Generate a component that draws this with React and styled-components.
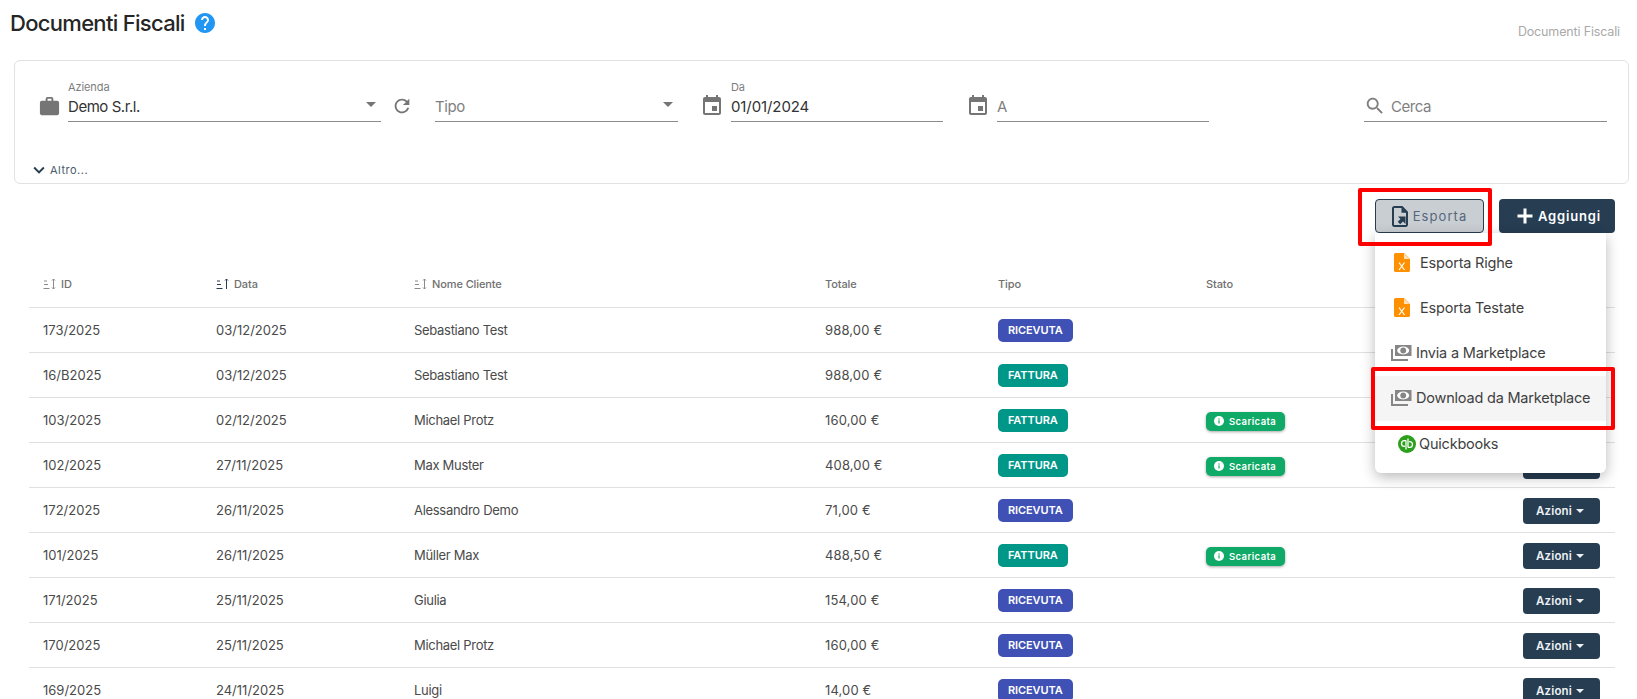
import React from "react";
import styled, { createGlobalStyle } from "styled-components";

const Global = createGlobalStyle`
  html, body { margin: 0; padding: 0; background: #fff; height: 699px; overflow: hidden; }
  body { font-family: Inter, "Noto Sans", sans-serif; color: #3d3d3d; }
  * { box-sizing: border-box; }
`;

const Page = styled.div`
  width: 1637px;
  height: 699px;
  overflow: hidden;
  position: relative;
`;
const Header = styled.header`
  display: flex;
  justify-content: space-between;
  padding: 11px 17px 0 10px;
  height: 60px;
`;
const TitleWrap = styled.div`
  display: flex;
  align-items: flex-start;
  gap: 8px;
`;
const Title = styled.h1`
  margin: 0;
  font-size: 22px;
  line-height: 25px;
  font-weight: 500;
  letter-spacing: -0.7px;
  color: #262626;
`;
const Crumb = styled.div`
  font-size: 12.5px;
  line-height: 16px;
  margin-top: 13px;
  color: #a9a9a9;
  letter-spacing: -0.15px;
`;
const FilterCard = styled.section`
  margin-left: 14px;
  width: 1615px;
  height: 124px;
  border: 1px solid #e2e2e2;
  border-radius: 6px;
  padding: 0 23px 0 23px;
  position: relative;
  display: flex;
  flex-direction: column;
  justify-content: space-between;
`;
const FilterRow = styled.div`
  display: flex;
  align-items: flex-end;
  height: 61px;
`;
const IconCell = styled.div`
  width: ${(p) => p.$w}px;
  margin-left: ${(p) => p.$ml || 0}px;
  height: 24px;
  margin-bottom: 4px;
  display: flex;
  align-items: center;
  color: #757575;
  flex-shrink: 0;
`;
const Field = styled.div`
  width: ${(p) => p.$w}px;
  margin-left: ${(p) => p.$ml || 0}px;
  flex-shrink: 0;
  height: 35px;
  border-bottom: 1px solid #8b8b8b;
  position: relative;
  display: flex;
  align-items: flex-end;
  padding-bottom: 4px;
  font-size: 15px;
  line-height: 20px;
  letter-spacing: ${(p) => (p.$date ? "-0.1px" : "-0.45px")};
  color: ${(p) => (p.$ph ? "#7f7f7f" : "#333")};
`;
const FloatLabel = styled.label`
  position: absolute;
  left: 0;
  top: -6px;
  font-size: 11px;
  line-height: 13px;
  letter-spacing: -0.1px;
  color: #7d7d7d;
`;
const Caret = styled.span`
  position: absolute;
  right: 5px;
  top: 15px;
  width: 0;
  height: 0;
  border-left: 5px solid transparent;
  border-right: 5px solid transparent;
  border-top: 5px solid #757575;
`;
const SearchText = styled.span`
  margin-left: 5px;
`;
const More = styled.div`
  display: flex;
  align-items: center;
  gap: 0;
  margin-left: -10px;
  margin-bottom: 2px;
  font-size: 11px;
  line-height: 14px;
  letter-spacing: 0.5px;
  color: #4a5b6c;
`;
const ActionBar = styled.div`
  display: flex;
  justify-content: flex-end;
  gap: 15px;
  padding: 15px 22px 0 0;
  height: 64px;
  position: relative;
`;
const ExportButton = styled.button`
  width: 109px;
  height: 34px;
  background: #c9ced3;
  border: 1px solid #263d52;
  border-radius: 4px;
  font-family: inherit;
  font-size: 13px;
  font-weight: 400;
  letter-spacing: 1.05px;
  color: #56677a;
  display: flex;
  align-items: center;
  justify-content: center;
  gap: 5px;
  padding: 0;
`;
const AddButton = styled.button`
  width: 116px;
  height: 34px;
  background: #263d52;
  border: 0;
  border-radius: 4px;
  font-family: inherit;
  font-size: 13px;
  font-weight: 600;
  letter-spacing: 0.85px;
  color: #fff;
  display: flex;
  align-items: center;
  justify-content: center;
  gap: 1px;
  padding: 0;
`;
const Menu = styled.div`
  position: absolute;
  left: 1375px;
  top: 233px;
  width: 231px;
  height: 240px;
  background: #fff;
  border-radius: 0 0 6px 6px;
  box-shadow: 0 4px 14px rgba(0, 0, 0, 0.28);
  padding: 8px 0 0;
  z-index: 5;
`;
const MenuItem = styled.div`
  height: 45px;
  display: flex;
  align-items: center;
  padding-left: ${(p) => p.$pl}px;
  padding-bottom: ${(p) => p.$pb ?? 2}px;
  gap: ${(p) => p.$gap}px;
  background: ${(p) => (p.$active ? "#f5f5f5" : "transparent")};
  font-size: 14.5px;
  letter-spacing: -0.2px;
  color: #3f3f3f;
`;
const Annotation = styled.div`
  position: absolute;
  left: ${(p) => p.$x}px;
  top: ${(p) => p.$y}px;
  width: ${(p) => p.$w}px;
  height: ${(p) => p.$h}px;
  border: 4px solid #ff0000;
  border-radius: 2px;
  z-index: 6;
`;
const Table = styled.div`
  margin-left: 29px;
  width: 1586px;
`;
const cols = "173px 198px 411px 173px 208px 1fr 92px";
const HeadRow = styled.div`
  display: grid;
  grid-template-columns: ${cols};
  height: 60px;
  align-items: center;
  padding-top: 12px;
  border-bottom: 1px solid #e0e0e0;
  font-size: 11px;
  font-weight: 500;
  letter-spacing: -0.1px;
  color: #707070;
  & > div { display: flex; align-items: center; gap: 4px; padding-left: 14px; }
`;
const Row = styled.div`
  display: grid;
  grid-template-columns: ${cols};
  height: 45px;
  align-items: center;
  border-bottom: 1px solid #e0e0e0;
  font-size: 13px;
  color: #4a4a4a;
  & > div { padding-left: 14px; }
`;
const NameCell = styled.div`
  letter-spacing: -0.3px;
`;
const TotalCell = styled.div`
  letter-spacing: 0.15px;
`;
const TypeBadge = styled.span`
  display: inline-block;
  height: 23px;
  line-height: 22px;
  padding: 0 10px;
  border-radius: 5px;
  font-size: 11px;
  font-weight: 600;
  letter-spacing: -0.1px;
  color: #fff;
  background: ${(p) => (p.$type === "RICEVUTA" ? "#3f51b5" : "#009688")};
`;
const StatusBadge = styled.span`
  display: inline-flex;
  align-items: center;
  gap: 5px;
  height: 19px;
  width: 79px;
  padding-left: 8px;
  border-radius: 5px;
  font-size: 9.5px;
  font-weight: 600;
  letter-spacing: 0.4px;
  color: #fff;
  background: #0fa968;
  box-shadow: 0 1px 3px rgba(0, 0, 0, 0.35);
  position: relative;
  top: 1px;
`;
const ActionCell = styled.div`
  padding-left: 0 !important;
  padding-top: 1px;
  display: flex;
`;
const ActionButton = styled.button`
  width: 77px;
  height: 26px;
  background: #263d52;
  color: #eef1f4;
  border: 0;
  border-radius: 4px;
  font-family: inherit;
  font-size: 11.5px;
  font-weight: 600;
  letter-spacing: 0.2px;
  display: flex;
  align-items: center;
  justify-content: center;
  gap: 4px;
  padding: 0 3px 0 0;
  &::after {
    content: "";
    border-left: 4px solid transparent;
    border-right: 4px solid transparent;
    border-top: 4px solid #eef1f4;
  }
`;

const Mi = ({ d, size = 24, color = "currentColor" }) => (
  <svg width={size} height={size} viewBox="0 0 24 24" fill={color}><path d={d} /></svg>
);
const P = {
  work: "M20 6h-4V4c0-1.11-.89-2-2-2h-4c-1.11 0-2 .89-2 2v2H4c-1.11 0-1.99.89-1.99 2L2 19c0 1.11.89 2 2 2h16c1.11 0 2-.89 2-2V8c0-1.11-.89-2-2-2zm-6 0h-4V4h4v2z",
  refresh: "M17.65 6.35C16.2 4.9 14.21 4 12 4c-4.42 0-7.99 3.58-7.99 8s3.57 8 7.99 8c3.73 0 6.84-2.55 7.73-6h-2.08c-.82 2.33-3.04 4-5.65 4-3.31 0-6-2.69-6-6s2.69-6 6-6c1.66 0 3.14.69 4.22 1.78L13 11h7V4l-2.35 2.35z",
  event: "M17 12h-5v5h5v-5zM16 1v2H8V1H6v2H5c-1.11 0-1.99.9-1.99 2L3 19c0 1.1.89 2 2 2h14c1.1 0 2-.9 2-2V5c0-1.1-.9-2-2-2h-1V1h-2zm3 18H5V8h14v11z",
  search: "M15.5 14h-.79l-.28-.27C15.41 12.59 16 11.11 16 9.5 16 5.91 13.09 3 9.5 3S3 5.91 3 9.5 5.91 16 9.5 16c1.61 0 3.09-.59 4.23-1.57l.27.28v.79l5 4.99L20.49 19l-4.99-5zm-6 0C7.01 14 5 11.99 5 9.5S7.01 5 9.5 5 14 7.01 14 9.5 11.99 14 9.5 14z",
  help: "M12 2C6.48 2 2 6.48 2 12s4.48 10 10 10 10-4.48 10-10S17.52 2 12 2zm1 17h-2v-2h2v2zm2.07-7.75l-.9.92C13.45 12.9 13 13.5 13 15h-2v-.5c0-1.1.45-2.1 1.17-2.83l1.24-1.26c.37-.36.59-.86.59-1.41 0-1.1-.9-2-2-2s-2 .9-2 2H8c0-2.21 1.79-4 4-4s4 1.79 4 4c0 .88-.36 1.68-.93 2.25z",
  chevron: "M16.59 8.59L12 13.17 7.41 8.59 6 10l6 6 6-6z",
  plus: "M19.500 13.500h-6v6h-3v-6h-6v-3h6v-6h3v6h6v3z",
};

const SortIcon = ({ active }) => (
  <svg width="14" height="12" viewBox="0 0 14 12" fill="none" stroke={active ? "#263d52" : "#8a8a8a"} strokeWidth="1">
    <path d="M1 3h3M1 6.500h4M0.500 10.500h6" />
    <path d="M10.500 1v10M9 2.500l1.500-1.500 1.500 1.500" />
    {!active && <path d="M9 9.500l1.500 1.500 1.500-1.500" />}
  </svg>
);

const ExportIcon = () => (
  <svg width="16" height="21" viewBox="0 0 16 21">
    <path d="M2.200 1h7.800l5 5.200v12.600a1.200 1.200 0 0 1-1.200 1.200h-11.600a1.200 1.200 0 0 1-1.200-1.200v-16.600a1.200 1.200 0 0 1 1.200-1.200z" fill="none" stroke="#263d52" strokeWidth="2" strokeLinejoin="round" />
    <path d="M9.500 1.500v5.200h5z" fill="#263d52" />
    <path d="M6 10.500h7.500v7.500l-2.500-2.500-2.800 2.800-2.500-2.500 2.800-2.800z" fill="#263d52" />
  </svg>
);
const XlsIcon = () => (
  <svg width="16" height="19" viewBox="0 0 16 19">
    <path d="M1.500 0h8.500l6 6v11.500a1.500 1.500 0 0 1-1.500 1.500h-13a1.500 1.500 0 0 1-1.500-1.500v-16a1.500 1.500 0 0 1 1.500-1.500z" fill="#ff9100" />
    <path d="M10 0.500v5.500h5.500z" fill="#ffe2b8" />
    <path d="M5 9.500l5.500 7.500M10.500 9.500l-5.500 7.500" stroke="#fff" strokeWidth="1.200" fill="none" />
  </svg>
);
const StackIcon = () => (
  <svg width="21" height="17" viewBox="0 0 21 17">
    <path d="M1 5v11h16" fill="none" stroke="#868686" strokeWidth="2" />
    <rect x="4" y="1" width="16.500" height="11" fill="#868686" />
    <ellipse cx="12.200" cy="6.500" rx="6" ry="3.900" fill="#fff" />
    <circle cx="12.200" cy="6.500" r="2.900" fill="#868686" />
  </svg>
);
const QbIcon = () => (
  <svg width="18" height="18" viewBox="0 0 18 18">
    <circle cx="9" cy="9" r="9" fill="#2ca01c" />
    <g fill="none" stroke="#fff" strokeWidth="1.300">
      <path d="M8 5.600v9" />
      <path d="M8 5.600H6.400a2.900 2.900 0 0 0 0 5.800h.7" />
      <path d="M10 3.400v9" />
      <path d="M10 12.400h1.600a2.900 2.900 0 0 0 0-5.800h-.7" />
    </g>
  </svg>
);
const InfoIcon = () => (
  <svg width="10" height="10" viewBox="0 0 10 10">
    <circle cx="5" cy="5" r="5" fill="#fff" />
    <rect x="4.400" y="4.300" width="1.200" height="3.200" fill="#0fa968" />
    <rect x="4.400" y="2.400" width="1.200" height="1.200" fill="#0fa968" />
  </svg>
);

const rows = [
  ["173/2025", "03/12/2025", "Sebastiano Test", "988,00 €", "RICEVUTA", false],
  ["16/B2025", "03/12/2025", "Sebastiano Test", "988,00 €", "FATTURA", false],
  ["103/2025", "02/12/2025", "Michael Protz", "160,00 €", "FATTURA", true],
  ["102/2025", "27/11/2025", "Max Muster", "408,00 €", "FATTURA", true],
  ["172/2025", "26/11/2025", "Alessandro Demo", "71,00 €", "RICEVUTA", false],
  ["101/2025", "26/11/2025", "Müller Max", "488,50 €", "FATTURA", true],
  ["171/2025", "25/11/2025", "Giulia", "154,00 €", "RICEVUTA", false],
  ["170/2025", "25/11/2025", "Michael Protz", "160,00 €", "RICEVUTA", false],
  ["169/2025", "24/11/2025", "Luigi", "14,00 €", "RICEVUTA", false],
];

export default function App() {
  return (
    <Page>
      <Global />
      <Header>
        <TitleWrap>
          <Title>Documenti Fiscali</Title>
          <Mi d={P.help} size={24} color="#2196f3" />
        </TitleWrap>
        <Crumb>Documenti Fiscali</Crumb>
      </Header>
      <FilterCard>
        <FilterRow>
          <IconCell $w={30}><Mi d={P.work} size={23} /></IconCell>
          <Field $w={313}>
            <FloatLabel>Azienda</FloatLabel>
            Demo S.r.l.
            <Caret />
          </Field>
          <IconCell $w={44} $ml={10}><Mi d={P.refresh} size={22} /></IconCell>
          <Field $w={243} $ph>Tipo<Caret /></Field>
          <IconCell $w={31} $ml={22}><Mi d={P.event} /></IconCell>
          <Field $w={212} $date>
            <FloatLabel>Da</FloatLabel>
            01/01/2024
          </Field>
          <IconCell $w={31} $ml={23}><Mi d={P.event} /></IconCell>
          <Field $w={212} $ph>A</Field>
          <Field $w={243} $ml={155} $ph>
            <Mi d={P.search} size={22} />
            <SearchText>Cerca</SearchText>
          </Field>
        </FilterRow>
        <More>
          <Mi d={P.chevron} size={22} color="#263d52" />
          Altro...
        </More>
      </FilterCard>
      <ActionBar>
        <ExportButton><ExportIcon />Esporta</ExportButton>
        <AddButton><Mi d={P.plus} size={24} />Aggiungi</AddButton>
      </ActionBar>
      <Menu>
        <MenuItem $pl={19} $gap={10}><XlsIcon />Esporta Righe</MenuItem>
        <MenuItem $pl={19} $gap={10}><XlsIcon />Esporta Testate</MenuItem>
        <MenuItem $pl={16} $gap={4}><StackIcon />Invia a Marketplace</MenuItem>
        <MenuItem $pl={16} $gap={4} $active><StackIcon />Download da Marketplace</MenuItem>
        <MenuItem $pl={23} $gap={3} $pb={0}><QbIcon />Quickbooks</MenuItem>
      </Menu>
      <Annotation $x={1358} $y={188} $w={134} $h={58} />
      <Annotation $x={1371} $y={367} $w={244} $h={63} />
      <Table>
        <HeadRow>
          <div><SortIcon />ID</div>
          <div><SortIcon active />Data</div>
          <div><SortIcon />Nome Cliente</div>
          <div>Totale</div>
          <div>Tipo</div>
          <div>Stato</div>
          <div />
        </HeadRow>
        {rows.map((r) => (
          <Row key={r[0]}>
            <div>{r[0]}</div>
            <div>{r[1]}</div>
            <NameCell>{r[2]}</NameCell>
            <TotalCell>{r[3]}</TotalCell>
            <div><TypeBadge $type={r[4]}>{r[4]}</TypeBadge></div>
            <div>{r[5] && <StatusBadge><InfoIcon />Scaricata</StatusBadge>}</div>
            <ActionCell><ActionButton>Azioni</ActionButton></ActionCell>
          </Row>
        ))}
      </Table>
    </Page>
  );
}
